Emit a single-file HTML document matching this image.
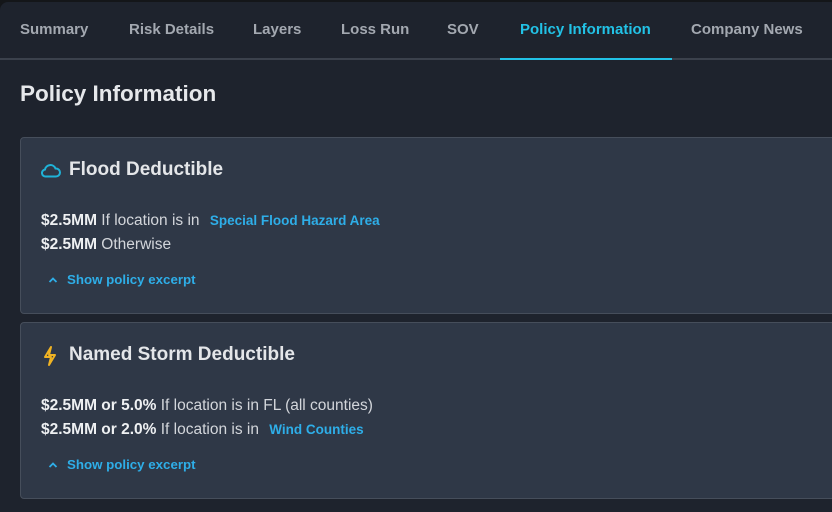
<!DOCTYPE html>
<html><head><style>
*{margin:0;padding:0;box-sizing:border-box}
body{width:832px;height:504px;overflow:hidden;background:#141619;font-family:"Liberation Sans",sans-serif;position:relative}
.main{position:absolute;left:0;top:2px;width:840px;height:510px;background:#1e232d;border-radius:8px 0 0 0}
.tab{position:absolute;top:19px;font-size:15px;font-weight:bold;color:#a3a8b0;white-space:nowrap}
.div{position:absolute;left:0;top:56px;width:832px;height:2px;background:#3b414c}
.ul{position:absolute;left:500px;top:56px;width:172px;height:2px;background:#22c2e6}
h1{position:absolute;left:20px;top:79px;font-size:22.5px;color:#e6e8eb;font-weight:bold}
.card{position:absolute;left:20px;width:830px;background:#2f3847;border:1px solid #464e5b;border-radius:4px}
.ct{position:absolute;left:48px;font-size:19px;font-weight:bold;color:#e4e6e9;white-space:nowrap}
.ln{position:absolute;left:20px;font-size:15.5px;color:#d3d6db;white-space:nowrap}
.ln b{color:#eef0f2}
.lk{color:#2eaee8;font-weight:bold;font-size:13.5px;margin-left:6px}
.sh{position:absolute;left:27px;font-size:13.3px;font-weight:bold;color:#2eaee8;white-space:nowrap}
</style></head><body>
<div class="main">
<div class="tab" style="left:20px">Summary</div>
<div class="tab" style="left:129px">Risk Details</div>
<div class="tab" style="left:253px">Layers</div>
<div class="tab" style="left:341px">Loss Run</div>
<div class="tab" style="left:447px">SOV</div>
<div class="tab" style="left:520px;color:#22c2e6">Policy Information</div>
<div class="tab" style="left:691px">Company News</div>
<div class="div"></div><div class="ul"></div>
<h1>Policy Information</h1>
<div class="card" style="top:135px;height:177px">
<svg style="position:absolute;left:19px;top:24px" width="22" height="16" viewBox="0 0 22 16"><path d="M6 14.5h10a4 4 0 0 0 0-8h-.5A5.5 5.5 0 0 0 5 7.5 3.5 3.5 0 0 0 6 14.5z" fill="none" stroke="#1fb3d8" stroke-width="2"/></svg>
<div class="ct" style="top:21px">Flood Deductible</div>
<div class="ln" style="top:74px"><b>$2.5MM</b> If location is in <span class="lk">Special Flood Hazard Area</span></div>
<div class="ln" style="top:98px"><b>$2.5MM</b> Otherwise</div>
<div class="sh" style="top:134px"><svg width="10" height="8" viewBox="0 0 10 8" style="margin-right:9px"><path d="M1.5 6L5 2.5 8.5 6" fill="none" stroke="#2eaee8" stroke-width="1.8"/></svg>Show policy excerpt</div>
</div>
<div class="card" style="top:320px;height:177px">
<svg style="position:absolute;left:21px;top:22px" width="16" height="22" viewBox="0 0 16 22"><path d="M9 2L3 12h6l-2 8 6-10H7z" fill="none" stroke="#f0b323" stroke-width="2" stroke-linejoin="round"/></svg>
<div class="ct" style="top:21px">Named Storm Deductible</div>
<div class="ln" style="top:74px"><b>$2.5MM or 5.0%</b> If location is in FL (all counties)</div>
<div class="ln" style="top:98px"><b>$2.5MM or 2.0%</b> If location is in <span class="lk">Wind Counties</span></div>
<div class="sh" style="top:134px"><svg width="10" height="8" viewBox="0 0 10 8" style="margin-right:9px"><path d="M1.5 6L5 2.5 8.5 6" fill="none" stroke="#2eaee8" stroke-width="1.8"/></svg>Show policy excerpt</div>
</div>
</div>
</body></html>
